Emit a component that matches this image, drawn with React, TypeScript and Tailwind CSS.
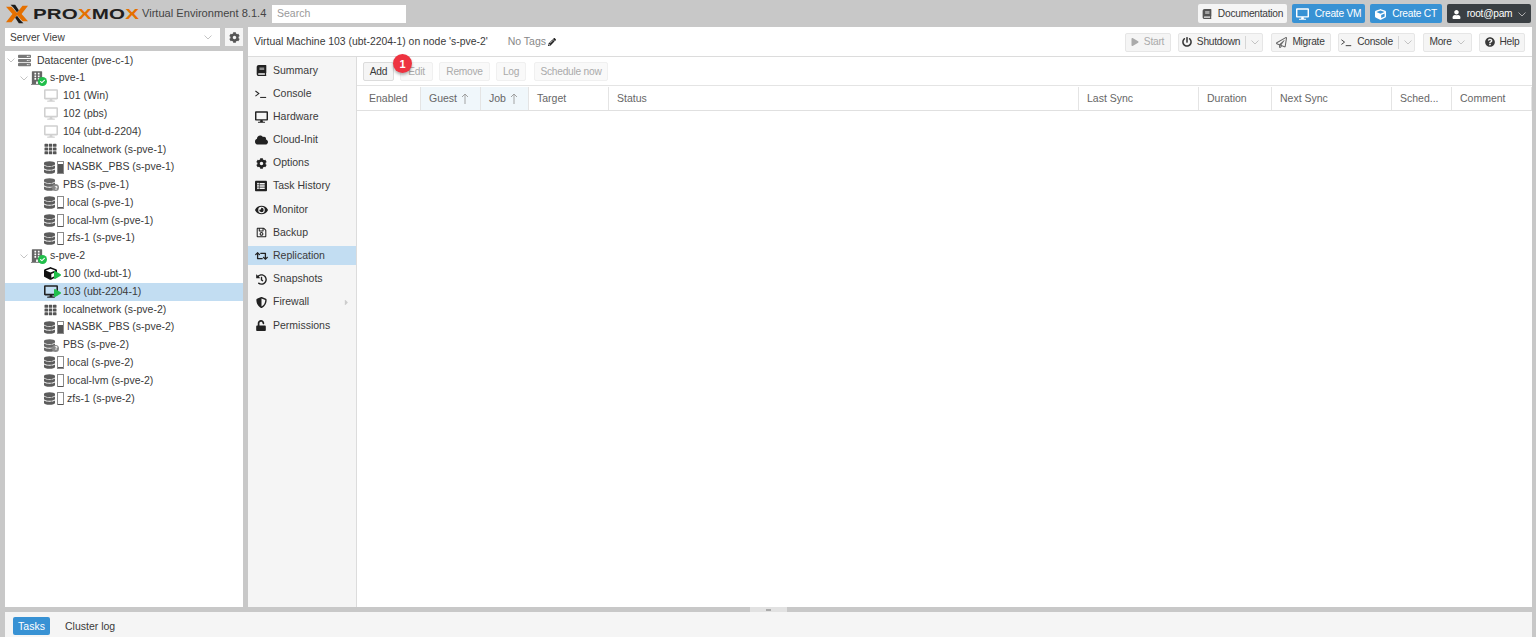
import type { ReactNode } from 'react'
import {
  FaBook,
  FaBuilding,
  FaCheck,
  FaCloud,
  FaCog,
  FaCube,
  FaDatabase,
  FaDesktop,
  FaEye,
  FaHistory,
  FaListAlt,
  FaPlay,
  FaPowerOff,
  FaQuestion,
  FaQuestionCircle,
  FaRegPaperPlane,
  FaRegSave,
  FaRetweet,
  FaServer,
  FaShieldAlt,
  FaTh,
  FaUnlock,
  FaUser,
  FaCaretRight,
  FaPencilAlt,
} from 'react-icons/fa'

function Chevron({ className = 'text-[#bdbdbd]' }: { className?: string }) {
  return (
    <svg viewBox="0 0 8 5" className={`h-[5px] w-[8px] shrink-0 ${className}`} fill="none" stroke="currentColor" strokeWidth="0.9">
      <path d="M0.5 0.5 4 4 7.5 0.5" />
    </svg>
  )
}

function Terminal({ className = '' }: { className?: string }) {
  return (
    <svg viewBox="0 0 14 10" className={className} fill="none" stroke="currentColor" strokeWidth="1.2">
      <path d="M0.5 1.5 4.5 4.5 0.5 7.5" />
      <path d="M6 9H13" />
    </svg>
  )
}

function Logo() {
  return (
    <div className="flex w-[134px] shrink-0 items-center">
      <svg viewBox="0 0 24 20" className="h-[20px] w-[22px] shrink-0">
        <path d="M0 2H6L13 10 6 19H0L7 10Z" fill="#e57000" />
        <path d="M24 1H18L11 10 18 18H24L17 10Z" fill="#e57000" />
        <path d="M5 0H10L12 3 14 6 12 8 8 3ZM19 20H14L12 17 10 14 12 12 16 17Z" fill="#1a1a1a" />
      </svg>
      <div className="ml-[5px] flex origin-left [transform:scaleX(1.37)] text-[15px] leading-none font-bold tracking-[0.1px] text-[#1f1f1f]">
        PRO<span className="text-[#e57000]">X</span>MO<span className="text-[#e57000]">X</span>
      </div>
    </div>
  )
}

function TopButton({ children, className, width }: { children: ReactNode; className: string; width: string }) {
  return (
    <div className={`flex h-[19px] items-center justify-center gap-[6px] rounded-[2px] pt-px text-[10.2px] tracking-[-0.25px] ${width} ${className}`}>
      {children}
    </div>
  )
}

function Bar({ pct }: { pct: number }) {
  return (
    <div className="relative ml-[2px] h-[13px] w-[7px] border border-[#8a8a8a] bg-white">
      <div className="absolute right-0 bottom-0 left-0 bg-[#555]" style={{ height: `${pct}%` }} />
    </div>
  )
}

function Db() {
  return <FaDatabase className="h-[13px] w-[11px] text-[#5c5c5c]" />
}

function NodeIcon() {
  return (
    <span className="relative block h-[14px] w-[15px]">
      <FaBuilding className="h-[14px] w-[12px] text-[#666]" />
      <span className="absolute right-[-1px] bottom-[-1px] flex h-[9px] w-[9px] items-center justify-center rounded-full bg-[#21bf4b]">
        <FaCheck className="h-[5px] w-[5px] text-white" />
      </span>
    </span>
  )
}

function Running({ children }: { children: ReactNode }) {
  return (
    <span className="relative block h-[13px] w-[15px]">
      {children}
      <FaPlay className="absolute top-[4px] right-[-2px] h-[8px] w-[7px] text-[#21bf4b]" />
    </span>
  )
}

type TreeItem = {
  label: string
  icon: ReactNode
  pad: string
  gap: string
  chevron?: boolean
  selected?: boolean
}

const stopped = <span className="block w-[15px]"><FaDesktop className="h-[13px] w-[14px] text-[#d0d0d0]" /></span>
const network = <FaTh className="h-[12px] w-[13px] text-[#555]" />
const pbs = (
  <span className="relative block h-[13px] w-[15px]">
    <FaDatabase className="h-[13px] w-[11px] text-[#666]" />
    <span className="absolute right-0 bottom-0 flex h-[7px] w-[7px] items-center justify-center rounded-full bg-[#888]">
      <FaQuestion className="h-[4px] w-[4px] text-white" />
    </span>
  </span>
)
const storage = (pct: number) => (
  <span className="flex items-center">
    <Db />
    <Bar pct={pct} />
  </span>
)

const nodeStorages = (n: string): TreeItem[] => [
  { label: `localnetwork (${n})`, icon: network, pad: 'pl-[39px]', gap: 'ml-[6px]' },
  { label: `NASBK_PBS (${n})`, icon: storage(75), pad: 'pl-[39px]', gap: 'ml-[3px]' },
  { label: `PBS (${n})`, icon: pbs, pad: 'pl-[39px]', gap: 'ml-[4px]' },
  { label: `local (${n})`, icon: storage(10), pad: 'pl-[39px]', gap: 'ml-[3px]' },
  { label: `local-lvm (${n})`, icon: storage(2), pad: 'pl-[39px]', gap: 'ml-[3px]' },
  { label: `zfs-1 (${n})`, icon: storage(2), pad: 'pl-[39px]', gap: 'ml-[3px]' },
]

const vm = (label: string, icon: ReactNode, selected = false): TreeItem => ({
  label,
  icon,
  pad: 'pl-[39px]',
  gap: 'ml-[4px]',
  selected,
})

const tree: TreeItem[] = [
  {
    label: 'Datacenter (pve-c-1)',
    icon: <FaServer className="h-[13px] w-[13px] text-[#777]" />,
    pad: 'pl-[2px]',
    gap: 'ml-[6px]',
    chevron: true,
  },
  { label: 's-pve-1', icon: <NodeIcon />, pad: 'pl-[15px]', gap: 'ml-[4px]', chevron: true },
  vm('101 (Win)', stopped),
  vm('102 (pbs)', stopped),
  vm('104 (ubt-d-2204)', stopped),
  ...nodeStorages('s-pve-1'),
  { label: 's-pve-2', icon: <NodeIcon />, pad: 'pl-[15px]', gap: 'ml-[4px]', chevron: true },
  vm(
    '100 (lxd-ubt-1)',
    <Running>
      <FaCube className="h-[13px] w-[13px] text-[#111]" />
    </Running>,
  ),
  vm(
    '103 (ubt-2204-1)',
    <Running>
      <FaDesktop className="h-[13px] w-[14px] text-[#222]" />
    </Running>,
    true,
  ),
  ...nodeStorages('s-pve-2'),
]

function TreeRow({ item }: { item: TreeItem }) {
  return (
    <div className={`flex h-[17.8px] items-center ${item.pad} ${item.selected ? 'bg-[#c2ddf2]' : ''}`}>
      {item.chevron && (
        <span className="mr-[3px] flex w-[8px] justify-center">
          <Chevron />
        </span>
      )}
      {item.icon}
      <span className={`whitespace-nowrap ${item.gap}`}>{item.label}</span>
    </div>
  )
}

const nav = [
  { label: 'Summary', icon: <FaBook className="h-[11px] w-[11px]" /> },
  { label: 'Console', icon: <Terminal className="h-[10px] w-[12px]" /> },
  { label: 'Hardware', icon: <FaDesktop className="h-[12px] w-[13px]" /> },
  { label: 'Cloud-Init', icon: <FaCloud className="h-[12px] w-[13px]" /> },
  { label: 'Options', icon: <FaCog className="h-[11px] w-[11px]" /> },
  { label: 'Task History', icon: <FaListAlt className="h-[12px] w-[12px]" /> },
  { label: 'Monitor', icon: <FaEye className="h-[12px] w-[13px]" /> },
  { label: 'Backup', icon: <FaRegSave className="h-[11px] w-[11px]" /> },
  { label: 'Replication', icon: <FaRetweet className="h-[12px] w-[13px]" />, active: true },
  { label: 'Snapshots', icon: <FaHistory className="h-[11px] w-[11px]" /> },
  { label: 'Firewall', icon: <FaShieldAlt className="h-[11px] w-[11px]" />, more: true },
  { label: 'Permissions', icon: <FaUnlock className="h-[11px] w-[12px]" /> },
]

function HeaderButton({ children, width, faded }: { children: ReactNode; width: string; faded?: boolean }) {
  return (
    <div
      className={`flex h-[19px] items-center justify-center gap-[5px] rounded-[2px] border border-[#e6e6e6] bg-[#f5f5f5] text-[10.2px] tracking-[-0.25px] ${width} ${faded ? 'text-[#aaa]' : ''}`}
    >
      {children}
    </div>
  )
}

function Split() {
  return (
    <>
      <span className="h-[13px] w-px bg-[#d6d6d6]" />
      <Chevron />
    </>
  )
}

function ToolButton({ label, width, active }: { label: string; width: string; active?: boolean }) {
  return (
    <div
      className={`flex h-[19px] items-center justify-center rounded-[2px] border text-[10.2px] tracking-[-0.25px] ${width} ${
        active ? 'border-[#dcdcdc] bg-[#f5f5f5]' : 'border-[#f0f0f0] bg-[#f9f9f9] text-[#aaa]'
      }`}
    >
      {label}
    </div>
  )
}

const columns = [
  { label: 'Enabled', width: 'w-[64px] pl-[12px]' },
  { label: 'Guest', width: 'w-[60px] pl-[8px]', sorted: true },
  { label: 'Job', width: 'w-[48px] pl-[8px]', sorted: true },
  { label: 'Target', width: 'w-[80px] pl-[8px]' },
  { label: 'Status', width: 'w-[470px] pl-[8px]' },
  { label: 'Last Sync', width: 'w-[120px] pl-[8px]' },
  { label: 'Duration', width: 'w-[73px] pl-[8px]' },
  { label: 'Next Sync', width: 'w-[120px] pl-[8px]' },
  { label: 'Sched...', width: 'w-[60px] pl-[8px]' },
  { label: 'Comment', width: 'w-[80px] pl-[8px]' },
]

export default function App() {
  return (
    <div className="flex h-[637px] w-[1536px] flex-col overflow-hidden bg-[#c8c8c8] font-['Liberation_Sans',Arial,sans-serif] text-[10.5px] text-[#3a3a3a]">
      {/* top bar */}
      <div className="flex h-[27px] shrink-0 items-center pr-[5px] pl-[6px]">
        <Logo />
        <span className="ml-[2px] w-[130px] text-[11.1px] whitespace-nowrap text-[#444]">Virtual Environment 8.1.4</span>
        <div className="flex h-[18px] w-[134px] items-center bg-white pl-[5px] text-[#999]">Search</div>
        <div className="ml-auto flex gap-[5px]">
          <TopButton width="w-[89px]" className="bg-[#f5f5f5]">
            <FaBook className="h-[10px] w-[10px] text-[#555]" />
            Documentation
          </TopButton>
          <TopButton width="w-[73px]" className="bg-[#3892d4] text-white">
            <FaDesktop className="h-[12px] w-[13px]" />
            Create VM
          </TopButton>
          <TopButton width="w-[72px]" className="bg-[#3892d4] text-white">
            <FaCube className="h-[11px] w-[11px]" />
            Create CT
          </TopButton>
          <TopButton width="w-[84px]" className="bg-[#3a3f43] text-white">
            <FaUser className="h-[9px] w-[9px]" />
            root@pam
            <Chevron className="text-[#bbb]" />
          </TopButton>
        </div>
      </div>

      <div className="flex min-h-0 flex-1 pr-[4px] pl-[5px]">
        {/* resource tree */}
        <div className="flex w-[238px] shrink-0 flex-col">
          <div className="mt-[1px] flex h-[18px] shrink-0 items-center gap-[5px]">
            <div className="flex h-full flex-1 items-center justify-between bg-white pt-px pr-[8px] pl-[5px] text-[10.2px]">
              Server View
              <Chevron />
            </div>
            <div className="flex h-full w-[18px] items-center justify-center bg-[#f5f5f5]">
              <FaCog className="h-[11px] w-[11px] text-[#555]" />
            </div>
          </div>
          <div className="mt-[5px] flex-1 bg-white pt-[0.5px]">
            {tree.map((item) => (
              <TreeRow key={item.label} item={item} />
            ))}
          </div>
        </div>

        {/* content */}
        <div className="ml-[5px] flex min-w-0 flex-1 flex-col bg-white">
          <div className="flex h-[30px] shrink-0 items-center border-b border-[#dcdcdc] pt-px pr-[7px] pl-[6px]">
            <span className="text-[10.4px] whitespace-nowrap">Virtual Machine 103 (ubt-2204-1) on node 's-pve-2'</span>
            <span className="ml-[20px] flex items-center gap-[2px] text-[#888]">
              No Tags
              <FaPencilAlt className="h-[8px] w-[8px] text-[#222]" />
            </span>
            <div className="ml-auto flex gap-[7.5px]">
              <HeaderButton width="w-[46px]" faded>
                <FaPlay className="h-[8px] w-[8px]" />
                Start
              </HeaderButton>
              <HeaderButton width="w-[85px]">
                <FaPowerOff className="h-[10px] w-[10px]" />
                Shutdown
                <Split />
              </HeaderButton>
              <HeaderButton width="w-[60px]">
                <FaRegPaperPlane className="h-[11px] w-[11px] text-[#666]" />
                Migrate
              </HeaderButton>
              <HeaderButton width="w-[77px]">
                <Terminal className="h-[9px] w-[11px]" />
                Console
                <Split />
              </HeaderButton>
              <HeaderButton width="w-[49px]">
                More
                <Chevron />
              </HeaderButton>
              <HeaderButton width="w-[46px]">
                <FaQuestionCircle className="h-[10px] w-[10px]" />
                Help
              </HeaderButton>
            </div>
          </div>

          <div className="flex min-h-0 flex-1">
            <div className="flex w-[109px] shrink-0 flex-col gap-[4.2px] border-r border-[#dcdcdc] bg-[#f5f5f5] pt-[3.9px]">
              {nav.map((n) => (
                <div key={n.label} className={`flex h-[19px] shrink-0 items-center ${n.active ? 'bg-[#c2ddf2]' : ''}`}>
                  <span className="flex w-[25px] shrink-0 justify-center pl-[1px] text-[#222]">{n.icon}</span>
                  <span className="whitespace-nowrap">{n.label}</span>
                  {n.more && <FaCaretRight className="ml-[33px] h-[9px] w-[9px] text-[#ccc]" />}
                </div>
              ))}
            </div>

            <div className="relative min-w-0 flex-1">
              <div className="flex h-[29px] items-center gap-[6px] border-b border-[#e4e4e4] pt-px pl-[6px]">
                <ToolButton label="Add" width="w-[31px]" active />
                <ToolButton label="Edit" width="w-[33px]" />
                <ToolButton label="Remove" width="w-[51px]" />
                <ToolButton label="Log" width="w-[30px]" />
                <div className="ml-[2px]">
                  <ToolButton label="Schedule now" width="w-[74px]" />
                </div>
              </div>
              <div className="flex h-[25px] border-b border-[#e0e0e0] pt-px text-[#666]">
                {columns.map((c) => (
                  <div
                    key={c.label}
                    className={`flex shrink-0 items-center gap-[4px] border-r border-[#e4e4e4] ${c.width} ${
                      c.sorted ? 'bg-[#f0f7fb]' : ''
                    }`}
                  >
                    {c.label}
                    {c.sorted && (
                      <svg viewBox="0 0 8 11" className="h-[11px] w-[8px]" fill="none" stroke="#999" strokeWidth="0.9">
                        <path d="M4 11V1M1 4 4 1 7 4" />
                      </svg>
                    )}
                  </div>
                ))}
              </div>
              <div className="absolute top-[-3px] left-[36px] flex h-[19px] w-[19px] items-center justify-center rounded-full bg-[#ee3340] pt-px text-[11px] font-bold text-white shadow-[0_2px_3px_rgba(0,0,0,0.3)]">
                1
              </div>
            </div>
          </div>
        </div>
      </div>

      {/* splitter */}
      <div className="flex h-[5px] shrink-0 justify-center pl-[1px]">
        <div className="flex w-[37px] items-center justify-center bg-[#e2e2e2]">
          <span className="h-[2px] w-[5px] bg-[#aaa]" />
        </div>
      </div>

      {/* log panel */}
      <div className="mr-[4px] ml-[5px] flex h-[25px] shrink-0 items-end gap-[15px] bg-[#f5f5f5] pl-[8px]">
        <div className="mb-[2px] flex h-[18px] w-[37px] items-center justify-center rounded-[2px] bg-[#3892d4] pt-px text-white">Tasks</div>
        <div className="mb-[2px] flex h-[18px] items-center pt-px">Cluster log</div>
      </div>
    </div>
  )
}
